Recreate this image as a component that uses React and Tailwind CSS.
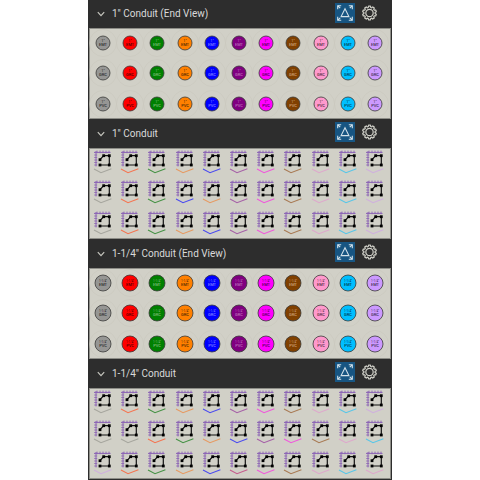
import { useState } from "react";

const TYPES = ["EMT", "GRC", "PVC"];

const FILLS = [
    "#969694", "#ff0000", "#008000", "#ff8000", "#0000ff", "#800080",
    "#ff00ff", "#804000", "#ff99cc", "#00bfff", "#cc99ff",
];

// label ink on the fills that are too dark for black
const LIGHT_INK = {
    "#008000": "#a8d0a0",
    "#0000ff": "#b4b4ff",
    "#800080": "#d09ad0",
    "#804000": "#e6c6a4",
};

const LINES = {
    gray: "#a6a69e",
    red: "#f47552",
    green: "#459245",
    orange: "#e69a62",
    blue: "#4a4af0",
    purple: "#a660a8",
    magenta: "#f058dc",
    brown: "#a87a54",
    pink: "#dea8cd",
    cyan: "#58c6e8",
    lilac: "#d0b0de",
    crimson: "#c65c8e",
};

const DEFAULT_RUN = ["gray", "red", "green", "orange", "blue", "purple", "magenta", "brown", "pink", "cyan", "lilac"];

const SECTIONS = [
    { title: '1" Conduit (End View)', size: '1"', kind: "end", radius: 7 },
    {
        title: '1" Conduit',
        kind: "run",
        rows: [
            DEFAULT_RUN,
            ["gray", "red", "green", "blue", "orange", "purple", "magenta", "brown", "pink", "cyan", "lilac"],
            DEFAULT_RUN,
        ],
    },
    { title: '1-1/4" Conduit (End View)', size: '1-1/4"', kind: "end", radius: 8 },
    {
        title: '1-1/4" Conduit',
        kind: "run",
        rows: [
            DEFAULT_RUN,
            ["gray", "gray", "red", "green", "orange", "blue", "purple", "magenta", "brown", "pink", "cyan"],
            ["lilac", "red", "green", "orange", "blue", "crimson", "magenta", "brown", "pink", "cyan", "pink"],
        ],
    },
];

function EndView({ fill, size, type, radius }) {
    return (
        <svg viewBox="0 0 27 30" className="w-[27px] h-[30px] overflow-visible">
            <circle cx="14" cy="15" r="13.5" fill="none" stroke="#c9c8be" strokeWidth="0.6" />
            <circle cx="14" cy="15" r={radius} fill={fill} stroke="#3a3a38" strokeWidth="0.8" />
            <g fill={LIGHT_INK[fill] ?? "#000000"} fillOpacity="0.75" textAnchor="middle" fontFamily="Roboto, sans-serif">
                <text x="14" y="14" fontSize={size.length > 2 ? 3 : 4}>{size}</text>
                <text x="14" y="18" fontSize="4" fontWeight="500">{type}</text>
            </g>
        </svg>
    );
}

const TICKS = [8, 11, 14, 17, 20];
const SIDE_TICKS = [7, 9.5, 12, 14.5, 17];
const NODES = [[11, 11.7], [14.7, 7.7], [20.3, 7.7], [20.3, 17], [11, 17]];

function RunView({ color }) {
    return (
        <svg viewBox="0 0 27 30" className="w-[27px] h-[30px] overflow-visible">
            <g stroke="#8a62b4" fill="none">
                <path d="M5 4.4H21.5M7 3V18.4" strokeWidth="1" />
                {TICKS.map((x) => (
                    <path key={x} d={`M${x} 2.6V5.2`} strokeWidth="0.9" />
                ))}
                {SIDE_TICKS.map((y) => (
                    <path key={y} d={`M5.2 ${y}H8.2`} strokeWidth="0.8" />
                ))}
            </g>
            <path d="M11 11.7L14.7 7.7H20.3V17H11" fill="none" stroke="#111" strokeWidth="1.2" />
            {NODES.map(([x, y]) => (
                <rect key={`${x}-${y}`} x={x - 1.4} y={y - 1.4} width="2.8" height="2.8" fill="#000" />
            ))}
            <path d="M5 21L12 24.7L22.4 20.8" fill="none" stroke={color} strokeWidth="1.1" />
        </svg>
    );
}

function ScaleIcon() {
    return (
        <svg viewBox="0 0 20 20" className="w-5 h-5" fill="none" stroke="#d3e2ea" strokeWidth="1.1">
            <path d="M10 5.8L13.9 13.6H6.1Z" />
            <path d="M2.7 6.2V2.7H6.2M13.8 2.7H17.3V6.2M17.3 13.8V17.3H13.8M6.2 17.3H2.7V13.8" />
            <path d="M3 3L5.2 5.2M17 3L14.8 5.2M17 17L14.8 14.8M3 17L5.2 14.8" />
        </svg>
    );
}

// scalloped outline with ten teeth
const gearPath = (() => {
    const pts = [];
    for (let i = 0; i < 10; i++) {
        [[-13, 5.6], [-8, 6.9], [8, 6.9], [13, 5.6]].forEach(([da, r]) => {
            const a = ((i * 36 + da) * Math.PI) / 180;
            pts.push(`${(8.5 + r * Math.sin(a)).toFixed(2)} ${(8 - r * Math.cos(a)).toFixed(2)}`);
        });
    }
    return `M${pts.join("L")}Z`;
})();

function GearIcon() {
    return (
        <svg viewBox="0 0 16 16" className="w-4 h-4" fill="none" stroke="#d0d0c8" strokeWidth="1.2" strokeLinejoin="round">
            <path d={gearPath} />
            <circle cx="8.5" cy="8" r="3.7" />
        </svg>
    );
}

function Section({ section, first }) {
    const [open, setOpen] = useState(true);

    return (
        <section>
            <header className={`flex items-center justify-between pl-2 pr-[14px] ${first ? "h-7" : "h-[29px]"}`}>
                <button
                    type="button"
                    aria-expanded={open}
                    onClick={() => setOpen(!open)}
                    className="flex items-center gap-[7px] text-[10px] leading-4 text-[#dadada]"
                >
                    <svg viewBox="0 0 8 8" className="w-2 h-2" fill="none" stroke="#c8c8c0" strokeWidth="1.2">
                        <path d="M0.8 2.2L4 5.6L7.2 2.2" />
                    </svg>
                    <h2 className="whitespace-nowrap">{section.title}</h2>
                </button>
                <div className="flex items-center gap-[6px] pb-[3px]">
                    <button type="button" aria-label="Fit to scale" className="bg-[#175582]">
                        <ScaleIcon />
                    </button>
                    <button type="button" aria-label="Settings">
                        <GearIcon />
                    </button>
                </div>
            </header>
            {open && (
                <div className="grid grid-cols-11 grid-rows-3 min-h-[91px] pr-[3px] bg-[#d1d0c7] shadow-[inset_0_0_0_1px_#8d8d87]">
                    {TYPES.map((type, row) =>
                        FILLS.map((fill, col) => (
                            <button
                                key={`${type}-${col}`}
                                type="button"
                                aria-label={`${section.title} ${type} ${col + 1}`}
                                className="flex items-center justify-center"
                            >
                                {section.kind === "end" ? (
                                    <EndView fill={fill} size={section.size} type={type} radius={section.radius} />
                                ) : (
                                    <RunView color={LINES[section.rows[row][col]]} />
                                )}
                            </button>
                        ))
                    )}
                </div>
            )}
        </section>
    );
}

export default function App() {
    return (
        <main className="min-h-screen bg-white font-['Roboto',sans-serif] flex justify-center">
            <div className="w-full max-w-[304px] bg-[#2d2d2d] border-x border-[#2d2d2d]">
                {SECTIONS.map((section, i) => (
                    <Section key={section.title} section={section} first={i === 0} />
                ))}
            </div>
        </main>
    );
}
